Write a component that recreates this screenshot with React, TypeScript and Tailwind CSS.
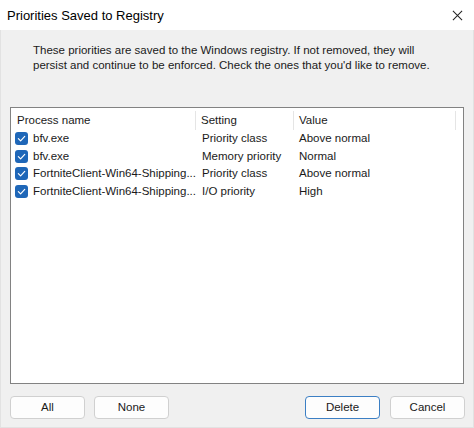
import React from "react";

const rows = [
  ["bfv.exe", "Priority class", "Above normal"],
  ["bfv.exe", "Memory priority", "Normal"],
  ["FortniteClient-Win64-Shipping...", "Priority class", "Above normal"],
  ["FortniteClient-Win64-Shipping...", "I/O priority", "High"],
];

function Check() {
  return (
    <span className="flex h-[13px] w-[13px] shrink-0 items-center justify-center rounded-[3px] bg-[#1f67b8]">
      <svg width="9" height="9" viewBox="0 0 10 10" fill="none">
        <path d="M1.5 5.2 L4 7.6 L8.6 2.6" stroke="white" strokeWidth="1.3" strokeLinecap="round" strokeLinejoin="round" />
      </svg>
    </span>
  );
}

export default function App() {
  return (
    <div
      className="flex h-[428px] w-[474px] flex-col overflow-hidden bg-[#f0f0f0] text-[11.5px] text-[#1a1a1a]"
      style={{ fontFamily: '"Liberation Sans", Arial, sans-serif' }}
    >
      <div className="flex h-[31px] items-center justify-between bg-white pl-[7px] pr-[11px] pt-[1px]">
        <span className="text-[13px] text-black">Priorities Saved to Registry</span>
        <svg width="11" height="11" viewBox="0 0 12 12">
          <path d="M1 1 L11 11 M11 1 L1 11" stroke="#222" strokeWidth="1.1" />
        </svg>
      </div>
      <div className="flex flex-1 flex-col border-x border-b border-[#e2e2e2] px-[9px] pb-[8px]">
        <p className="mt-[13px] pl-[23px] leading-[15px] whitespace-nowrap">
          These priorities are saved to the Windows registry. If not removed, they will
          <br />
          persist and continue to be enforced. Check the ones that you'd like to remove.
        </p>
        <div className="mt-[34px] h-[277px] border border-[#828282] bg-white">
          <div className="flex h-[22px] items-center pt-[3px]">
            <div className="flex h-full w-[185px] items-center border-r border-[#e5e5e5] pl-[6px]">Process name</div>
            <div className="flex h-full w-[98px] items-center border-r border-[#e5e5e5] pl-[5px]">Setting</div>
            <div className="flex h-full w-[162px] items-center border-r border-[#e5e5e5] pl-[5px]">Value</div>
          </div>
          {rows.map((r, i) => (
            <div key={i} className="flex h-[17.6px] items-center">
              <div className="flex w-[185px] items-center gap-[5px] pl-[4px]">
                <Check />
                <span className="whitespace-nowrap">{r[0]}</span>
              </div>
              <div className="w-[98px] pl-[6px]">{r[1]}</div>
              <div className="pl-[5px]">{r[2]}</div>
            </div>
          ))}
        </div>
        <div className="mt-[12px] flex items-center">
          <button className="h-[23px] w-[75px] rounded-[4px] border border-[#d0d0d0] bg-[#fdfdfd]">All</button>
          <button className="ml-[9px] h-[23px] w-[75px] rounded-[4px] border border-[#d0d0d0] bg-[#fdfdfd]">None</button>
          <button className="ml-auto h-[23px] w-[75px] rounded-[4px] border border-[#3c7fc4] bg-[#fdfdfd]">Delete</button>
          <button className="ml-[10px] mr-[-1px] h-[23px] w-[75px] rounded-[4px] border border-[#d0d0d0] bg-[#fdfdfd]">Cancel</button>
        </div>
      </div>
    </div>
  );
}
